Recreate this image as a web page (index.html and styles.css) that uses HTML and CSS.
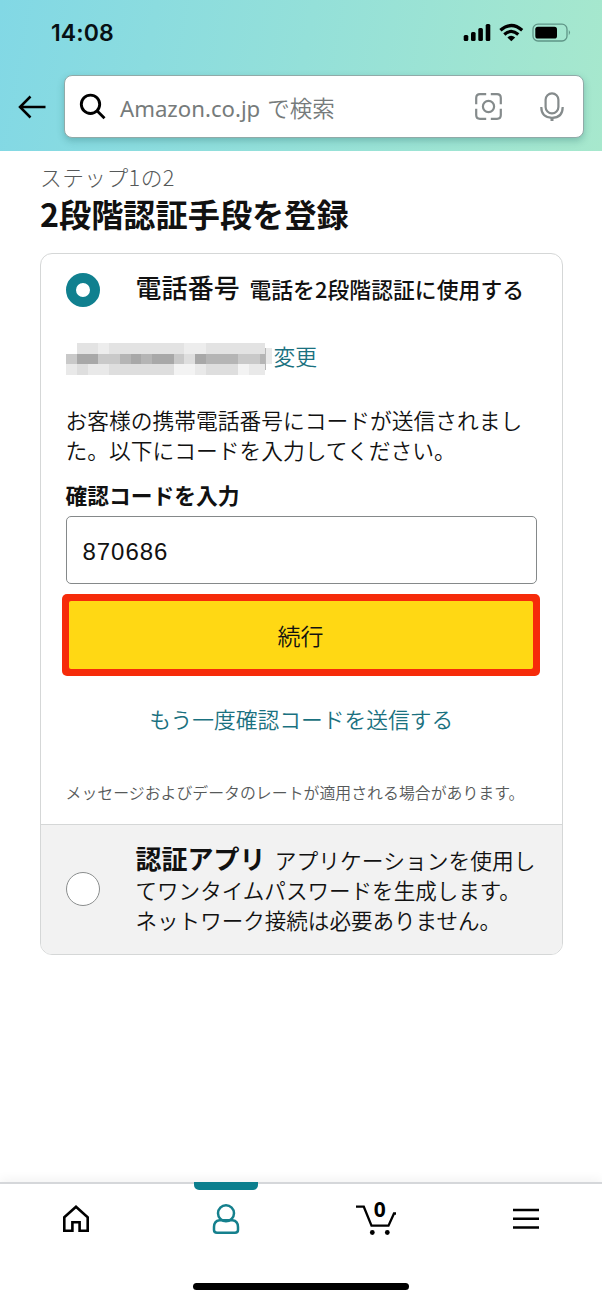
FILE: index.html
```html
<!DOCTYPE html>
<html lang="ja">
<head>
<meta charset="utf-8">
<title>2段階認証手段を登録</title>
<link rel="stylesheet" href="styles.css">
</head>
<body>
<div class="screen">
  <header class="header">
    <div class="status">
      <span class="time">14:08</span>
      <svg class="status-icons" width="108" height="20" viewBox="0 0 108 20">
        <rect x="0.7" y="12" width="4.6" height="6" rx="1.5"/>
        <rect x="8" y="9" width="4.6" height="9" rx="1.5"/>
        <rect x="15.3" y="5" width="4.6" height="13" rx="1.5"/>
        <rect x="22.7" y="1" width="4.6" height="17" rx="1.5"/>
        <g fill="none" stroke="#000" stroke-width="3.2">
          <path d="M37.4 7.3Q48.3 -2.3 59.2 7.3"/>
          <path d="M41.3 11.5Q48.3 5.4 55.3 11.5"/>
        </g>
        <path d="M44.4 14.4Q48.3 11 52.2 14.4L48.3 18.2Z"/>
        <rect x="70" y="1.2" width="34" height="16.8" rx="5" fill="none" stroke="#5f9587" stroke-width="1.3"/>
        <rect x="72.3" y="3.7" width="21.7" height="11.8" rx="2.6"/>
        <path d="M105.8 7Q108.2 9.6 105.8 12.2Z" fill="#5f9587"/>
      </svg>
    </div>
    <div class="search-row">
      <svg class="back" width="28" height="24" viewBox="0 0 28 24" fill="none" stroke="#000" stroke-width="2.5"><path d="M12.5 1.5L2 12L12.5 22.5M2 12H27.5"/></svg>
      <div class="search">
        <svg width="27" height="27" viewBox="0 0 27 27" fill="none" stroke="#000" stroke-width="2.9"><circle cx="11.5" cy="11.3" r="9.2"/><path d="M18 17.8L25.5 25.2"/></svg>
        <span class="placeholder"><span class="latin">Amazon.co.jp</span> で検索</span>
        <svg class="lens" width="27" height="27" viewBox="0 0 27 27" fill="none" stroke="#858b8c" stroke-width="2.2"><path d="M11.2 1.2H5Q1.2 1.2 1.2 5V11.2M15.8 1.2H22Q25.8 1.2 25.8 5V11.2M1.2 15.8V22Q1.2 25.8 5 25.8H11.2M25.8 15.8V22Q25.8 25.8 22 25.8H15.8"/><circle cx="13.5" cy="13.5" r="5.6"/></svg>
        <svg width="24" height="29" viewBox="0 0 24 29" fill="none" stroke="#858b8c" stroke-width="2.2"><rect x="5.6" y="1.3" width="12.8" height="20" rx="6.4"/><path d="M1.3 15Q1.3 25.8 12 25.8T22.7 15"/><path d="M12 25V29" stroke-width="3"/></svg>
      </div>
    </div>
  </header>

  <main class="content">
    <p class="step">ステップ1の2</p>
    <h1 class="title">2段階認証手段を登録</h1>

    <section class="card">
      <div class="phone">
        <div class="option">
          <span class="radio selected"></span>
          <p class="option-text strong"><b class="name">電話番号</b> 電話を2段階認証に使用する</p>
        </div>
        <div class="number">
          <svg width="206" height="32" viewBox="0 0 206 32" shape-rendering="crispEdges">
            <g transform="scale(10.77 10.67)">
              <path fill="#e3e3e3" d="M1 0H3V1H1ZM4 0H11V1H4ZM13 0H18.5V1H13Z"/>
              <path fill="#ededed" d="M3 0H4V1H3ZM11 0H13V1H11Z"/>
              <path fill="#c9c9c9" d="M0 1H11V2H0ZM12 1H18.5V2H12Z"/>
              <path fill="#a8a8a8" d="M1 1H3V2H1ZM6 1H7V2H6ZM8 1H10V2H8ZM12 1H13V2H12Z"/>
              <path fill="#b5b5b5" d="M5 1H6V2H5ZM7 1H8V2H7ZM13 1H16V2H13ZM18 1H18.5V2H18Z"/>
              <path fill="#dedede" d="M11 1H12V2H11ZM1 2H2V3H1ZM4 2H10V3H4ZM13 2H16V3H13Z"/>
              <path fill="#e9e9e9" d="M0 2H1V3H0ZM2 2H4V3H2ZM12 2H13V3H12ZM17 2H18.5V3H17ZM18.5 .5H19.1V2H18.5Z"/>
              <path fill="#f3f3f3" d="M10 2H12V3H10ZM16 2H17V3H16Z"/>
            </g>
            <rect x="198.5" y="5" width="1.5" height="22" fill="#b8b8b8"/>
          </svg>
          <a class="link">変更</a>
        </div>
        <p class="message">お客様の携帯電話番号にコードが送信されました。以下にコードを入力してください。</p>
        <label class="label">確認コードを入力</label>
        <div class="input">870686</div>
        <div class="highlight"><div class="button">続行</div></div>
        <a class="link resend">もう一度確認コードを送信する</a>
        <p class="note">メッセージおよびデータのレートが適用される場合があります。</p>
      </div>
      <div class="option app">
        <span class="radio"></span>
        <p class="option-text"><b class="name">認証アプリ</b> アプリケーションを使用し<br><span class="tight">てワンタイムパスワードを生成します。</span><br><span class="tight">ネットワーク接続は必要ありません。</span></p>
      </div>
    </section>
  </main>

  <nav class="nav">
    <div class="tab"><svg width="28" height="28" viewBox="0 0 28 28" fill="none" stroke="#000" stroke-width="2.6"><path d="M2.3 12.3L14 1.8L25.7 12.3V25.7H17.6V17.3H10.4V25.7H2.3Z"/></svg></div>
    <div class="tab active"><svg width="28" height="30" viewBox="0 0 28 30" fill="none" stroke="#15808d" stroke-width="2.5"><circle cx="14" cy="9.3" r="8"/><path d="M7.5 16.2H20.5Q26 17 26 23V26Q26 28.7 23 28.7H5Q2 28.7 2 26V23Q2 17 7.5 16.2Z"/></svg></div>
    <div class="tab"><svg width="42" height="52" viewBox="0 -9 42 52"><path d="M1 4.7H8.8L16.5 23.7H33.5L39 11.5H41" fill="none" stroke="#000" stroke-width="2.3"/><circle cx="17.3" cy="30.5" r="2.4"/><circle cx="32.3" cy="30.5" r="2.4"/><text class="count" x="24.8" y="15.2" text-anchor="middle">0</text></svg></div>
    <div class="tab"><svg width="28" height="24" viewBox="0 0 28 24" stroke="#000" stroke-width="2.5"><path d="M1 3H27M1 11.8H27M1 20.5H27"/></svg></div>
    <div class="home-bar"></div>
  </nav>
</div>
</body>
</html>
```
FILE: styles.css
```css
* { box-sizing: border-box; }
body, p, h1 { margin: 0; }
body {
  background: #fff;
  color: #111;
  font-family: "Noto Sans CJK JP", sans-serif;
  font-size: 21.75px;
  font-weight: 350;
}
svg { display: block; flex: none; }
.screen { width: 602px; height: 1302px; display: flex; flex-direction: column; overflow: hidden; }

.header {
  height: 151px;
  flex: none;
  background: linear-gradient(100deg, #82d8e5 0%, #94e0d9 50%, #a7e8cd 100%);
}
.status { height: 75px; padding: 23px 31px 0 51px; display: flex; justify-content: space-between; }
.time { font: 600 23px/21px Inter, sans-serif; letter-spacing: 0.1px; color: #071014; }
.search-row { display: flex; align-items: center; padding: 0 18px; gap: 18px; }
.search {
  width: 520px;
  height: 63px;
  display: flex;
  align-items: center;
  padding: 0 19px 0 14px;
  background: #fff;
  border: 1px solid #91aaa8;
  border-radius: 8px;
  box-shadow: 0 3px 7px rgba(30, 100, 100, 0.3);
}
.placeholder { flex: 1; padding: 2px 0 0 14px; color: #767b7b; font-size: 22.5px; line-height: 32px; font-weight: 350; white-space: nowrap; word-spacing: 2px; }
.latin { font-family: "Noto Sans", sans-serif; font-size: 22.2px; font-weight: 400; }
.lens { margin-right: 38px; }

.content { flex: 1; padding: 12px 40px 0; }
.step { line-height: 28px; color: #565959; font-weight: 300; letter-spacing: 0.4px; }
.title { margin-top: 1px; font-size: 32.2px; line-height: 42px; font-weight: 700; white-space: nowrap; }
.card { margin-top: 19px; width: 523px; height: 702px; border: 1.5px solid #d5d7d7; border-radius: 12px; overflow: hidden; }
.phone { height: 570px; padding: 14px 25px 0 24.5px; display: flex; flex-direction: column; }
.option { display: flex; align-items: center; }
.radio { width: 34px; height: 34px; flex: none; border: 1.5px solid #8b8e8e; border-radius: 50%; background: #fff; }
.radio.selected { border: 10.5px solid #10808f; }
.option-text { margin-left: 36px; line-height: 30px; white-space: nowrap; word-spacing: 4.5px; }
.option-text.strong { margin-top: -3px; font-weight: 500; line-height: 44px; letter-spacing: 0.1px; }
.name { font-size: 26px; font-weight: 700; }
.strong .name { font-weight: 500; }
.tight { font-size: 21.55px; }
.number { display: flex; align-items: center; gap: 2px; height: 32px; margin-top: 32px; }
.link { color: #1a7180; }
.number .link { margin-top: -7px; }
.message { margin-top: 30px; line-height: 30px; width: 460px; }
.label { margin-top: 15px; line-height: 30px; font-weight: 600; }
.input {
  width: 471px;
  height: 68px;
  margin-top: 6px;
  padding-left: 16px;
  border: 1.5px solid #85898a;
  border-radius: 5px;
  font: 24px/69px "Liberation Sans", sans-serif;
  letter-spacing: 0.95px;
}
.highlight { width: 478px; height: 82px; margin: 10px 0 0 -4px; padding: 7px; border-radius: 5px; background: #f62b0a; flex: none; }
.button { height: 68px; border-radius: 2px; background: #ffd814; text-align: center; font-size: 23px; line-height: 68px; }
.resend { margin-top: 28px; line-height: 30px; text-align: center; }
.note { margin-top: 47px; font-size: 15.9px; line-height: 24px; color: #565959; white-space: nowrap; }
.app { height: 130px; padding: 0 25px 2px 24.5px; background: #f2f2f2; border-top: 1.5px solid #d5d7d7; }

.nav {
  height: 120px;
  flex: none;
  padding: 0 1px;
  display: grid;
  grid-template-columns: repeat(4, 1fr);
  position: relative;
  border-top: 2px solid #d5d7da;
  box-shadow: 0 -3px 10px rgba(0, 0, 0, 0.05);
}
.tab { height: 70px; display: flex; align-items: center; justify-content: center; }
.active { position: relative; }
.active::before { content: ""; position: absolute; top: -2px; left: 50%; width: 64px; height: 8px; margin-left: -32px; border-radius: 0 0 5px 5px; background: #0c7f8e; }
.count { font: 700 21px "Noto Sans", sans-serif; }
.home-bar { position: absolute; left: 193px; bottom: 12px; width: 216px; height: 7px; border-radius: 4px; background: #000; }
```
